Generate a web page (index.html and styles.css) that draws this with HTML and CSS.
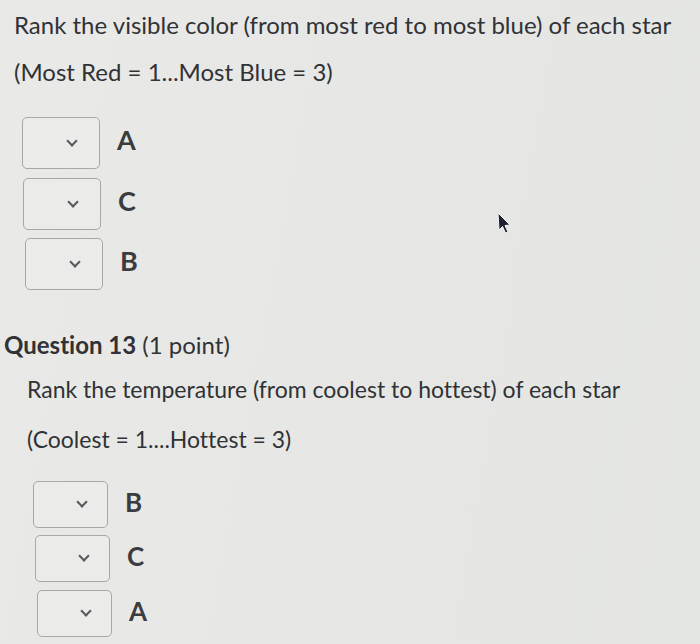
FILE: index.html
```html
<!DOCTYPE html>
<html>
<head>
<meta charset="utf-8">
<link rel="stylesheet" href="styles.css">
</head>
<body>
<div class="page">
  <section class="q q1">
    <p class="line first">Rank the visible color (from most red to most blue) of each star</p>
    <p class="line second">(Most Red = 1...Most Blue = 3)</p>
    <div class="rows">
      <div class="row r1"><div class="sel"><span class="chev"></span></div><span class="lab">A</span></div>
      <div class="row r2"><div class="sel"><span class="chev"></span></div><span class="lab">C</span></div>
      <div class="row r3"><div class="sel"><span class="chev"></span></div><span class="lab">B</span></div>
    </div>
  </section>
  <section class="q q2">
    <h2 class="qtitle"><b>Question 13</b> (1 point)</h2>
    <p class="line first">Rank the temperature (from coolest to hottest) of each star</p>
    <p class="line second">(Coolest = 1....Hottest = 3)</p>
    <div class="rows">
      <div class="row r1"><div class="sel"><span class="chev"></span></div><span class="lab">B</span></div>
      <div class="row r2"><div class="sel"><span class="chev"></span></div><span class="lab">C</span></div>
      <div class="row r3"><div class="sel"><span class="chev"></span></div><span class="lab">A</span></div>
    </div>
  </section>
  <svg class="cursor" width="16" height="22" viewBox="0 0 16 22">
    <polygon points="2,1 14,13 9,13.5 12,20 9.5,21 6.5,14.5 3,18" fill="#1e2230" stroke="#f4f4f4" stroke-width="1"/>
  </svg>
</div>
</body>
</html>
```
FILE: styles.css
```css
html, body {
  margin: 0;
  padding: 0;
}
body {
  background: #e7e8e5;
  font-family: Lato, "Open Sans", sans-serif;
  font-variant-ligatures: none;
  color: #303236;
}
.page {
  position: relative;
  width: 700px;
  height: 644px;
  overflow: hidden;
  background: linear-gradient(100deg, #e9eae8 0%, #e6e7e4 60%, #e4e6e3 100%);
}
.line {
  margin: 0;
  font-size: 24px;
  line-height: 28px;
  white-space: nowrap;
}
.q1 {
  padding-top: 11px;
  padding-left: 14px;
}
.q1 .second {
  margin-top: 19px;
}
.q1 .rows {
  margin-top: 31px;
  padding-left: 8px;
}
.rows {
  display: flex;
  flex-direction: column;
}
.row {
  display: flex;
  align-items: center;
}
.sel {
  box-sizing: border-box;
  width: 78px;
  height: 52px;
  border: 1.5px solid #a6a8a7;
  border-radius: 5px;
  background: #ebecea;
  position: relative;
}
.chev {
  position: absolute;
  left: 45px;
  top: 19px;
  width: 6px;
  height: 6px;
  border-right: 2px solid #55585c;
  border-bottom: 2px solid #55585c;
  transform: rotate(45deg);
}
.lab {
  margin-left: 17px;
  margin-top: -8px;
  font-size: 27px;
  font-weight: 700;
  color: #3a3c40;
}
.q1 .r2 { margin-top: 9px; padding-left: 1px; }
.q1 .r3 { margin-top: 8px; padding-left: 3px; }

.q2 {
  margin-top: 41px;
  padding-left: 4px;
}
.qtitle {
  margin: 0;
  font-size: 24px;
  line-height: 28px;
  font-weight: 400;
  white-space: nowrap;
}
.qtitle b {
  font-weight: 700;
}
.q2 .line {
  padding-left: 23px;
  font-size: 23px;
  line-height: 27px;
}
.q2 .first {
  margin-top: 17px;
}
.q2 .second {
  margin-top: 23px;
}
.q2 .rows {
  margin-top: 28px;
  padding-left: 29px;
}
.q2 .sel {
  width: 75px;
  height: 47px;
}
.q2 .chev {
  left: 44px;
  top: 16px;
}
.q2 .lab {
  font-size: 26px;
  margin-top: -6px;
}
.q2 .r2 { margin-top: 7px; padding-left: 2px; }
.q2 .r3 { margin-top: 8px; padding-left: 4px; }

.cursor {
  position: absolute;
  left: 496px;
  top: 212px;
}
```
